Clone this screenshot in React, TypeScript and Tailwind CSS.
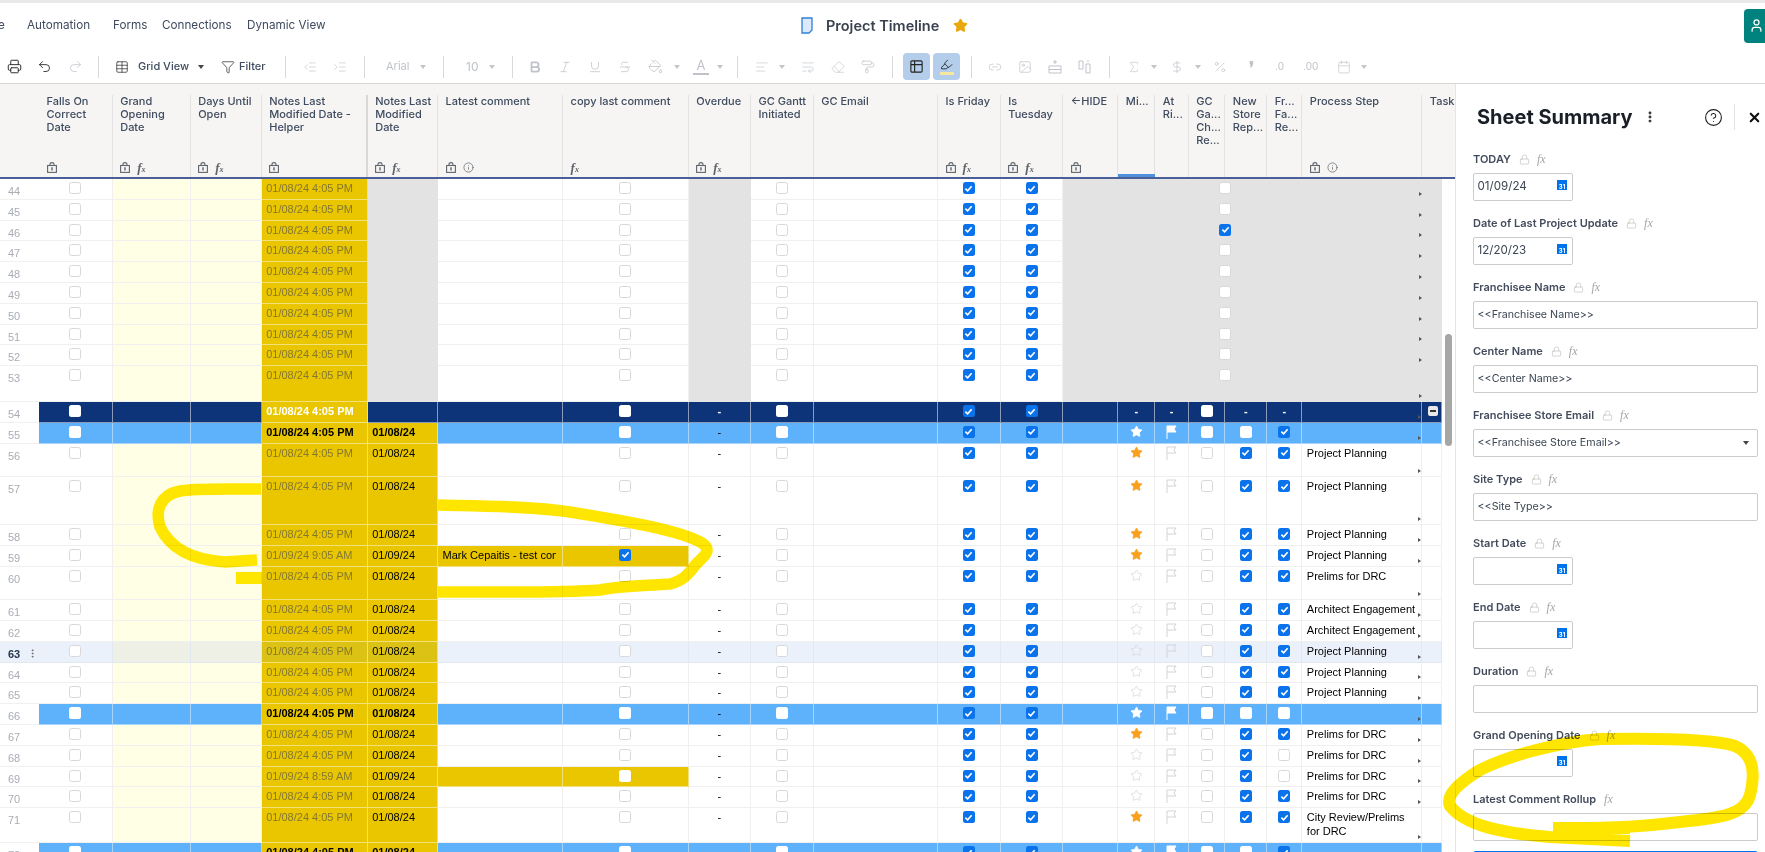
import React from 'react';
import clsx from 'clsx';
import {
  Printer, Undo2, Redo2, Table, Funnel, IndentDecrease, IndentIncrease, Bold, Italic, Underline,
  Strikethrough, PaintBucket, AlignLeft, WrapText, Eraser, PaintRoller, Table2, Highlighter,
  Link2, Image, Sigma, DollarSign, Percent, Calendar, Info, CircleHelp, X, EllipsisVertical,
  Star, User, Lock,
} from 'lucide-react';

type Kind = 'plain' | 'dark' | 'blue' | 'data';

type RowData = {
  n: number;
  h: string;
  kind: Kind;
  helper?: string;
  notes?: string;
  star?: boolean;
  fr?: boolean;
  step?: string[];
  latest?: string;
  gold?: boolean;
  copyChecked?: boolean;
  gc?: boolean;
  hover?: boolean;
};

const H1 = 'h-[20.8px]';
const STAMP = '01/08/24 4:05 PM';
const DAY = '01/08/24';

const rows: RowData[] = [
  ...[44, 45].map((n) => ({ n, h: H1, kind: 'plain' as Kind })),
  { n: 46, h: H1, kind: 'plain', gc: true },
  ...[47, 48, 49, 50, 51, 52].map((n) => ({ n, h: H1, kind: 'plain' as Kind })),
  { n: 53, h: 'h-[36px]', kind: 'plain' },
  { n: 54, h: H1, kind: 'dark' },
  { n: 55, h: H1, kind: 'blue', notes: DAY, fr: true },
  { n: 56, h: 'h-[33.4px]', kind: 'data', star: true, fr: true, step: ['Project Planning'] },
  { n: 57, h: 'h-[48px]', kind: 'data', star: true, fr: true, step: ['Project Planning'] },
  { n: 58, h: H1, kind: 'data', star: true, fr: true, step: ['Project Planning'] },
  { n: 59, h: H1, kind: 'data', star: true, fr: true, step: ['Project Planning'], helper: '01/09/24 9:05 AM', notes: '01/09/24', latest: 'Mark Cepaitis - test comment', gold: true, copyChecked: true },
  { n: 60, h: 'h-[33.4px]', kind: 'data', fr: true, step: ['Prelims for DRC'] },
  { n: 61, h: H1, kind: 'data', fr: true, step: ['Architect Engagement'] },
  { n: 62, h: H1, kind: 'data', fr: true, step: ['Architect Engagement'] },
  { n: 63, h: H1, kind: 'data', fr: true, step: ['Project Planning'], hover: true },
  { n: 64, h: H1, kind: 'data', fr: true, step: ['Project Planning'] },
  { n: 65, h: H1, kind: 'data', fr: true, step: ['Project Planning'] },
  { n: 66, h: H1, kind: 'blue', notes: DAY },
  { n: 67, h: H1, kind: 'data', star: true, fr: true, step: ['Prelims for DRC'] },
  { n: 68, h: H1, kind: 'data', step: ['Prelims for DRC'] },
  { n: 69, h: H1, kind: 'data', step: ['Prelims for DRC'], helper: '01/09/24 8:59 AM', notes: '01/09/24', gold: true },
  { n: 70, h: H1, kind: 'data', fr: true, step: ['Prelims for DRC'] },
  { n: 71, h: 'h-[35px]', kind: 'data', star: true, fr: true, step: ['City Review/Prelims', 'for DRC'] },
  { n: 72, h: H1, kind: 'blue', notes: DAY, fr: true },
];

const headers: { w: string; lines: string[]; lock?: boolean; fx?: boolean; info?: boolean; thick?: boolean; active?: boolean }[] = [
  { w: 'w-[39px]', lines: [] },
  { w: 'w-[73.7px]', lines: ['Falls On', 'Correct', 'Date'], lock: true },
  { w: 'w-[78px]', lines: ['Grand', 'Opening', 'Date'], lock: true, fx: true },
  { w: 'w-[71px]', lines: ['Days Until', 'Open'], lock: true, fx: true },
  { w: 'w-[106px]', lines: ['Notes Last', 'Modified Date -', 'Helper'], lock: true, thick: true },
  { w: 'w-[70.4px]', lines: ['Notes Last', 'Modified', 'Date'], lock: true, fx: true },
  { w: 'w-[125px]', lines: ['Latest comment'], lock: true, info: true },
  { w: 'w-[125.6px]', lines: ['copy last comment'], fx: true },
  { w: 'w-[62.4px]', lines: ['Overdue'], lock: true, fx: true },
  { w: 'w-[62.7px]', lines: ['GC Gantt', 'Initiated'] },
  { w: 'w-[124.3px]', lines: ['GC Email'] },
  { w: 'w-[62.8px]', lines: ['Is Friday'], lock: true, fx: true },
  { w: 'w-[62.5px]', lines: ['Is', 'Tuesday'], lock: true, fx: true },
  { w: 'w-[55px]', lines: ['←HIDE'], lock: true },
  { w: 'w-[37px]', lines: ['Mi...'], active: true },
  { w: 'w-[33.4px]', lines: ['At', 'Ri...'] },
  { w: 'w-[36.6px]', lines: ['GC', 'Ga...', 'Ch...', 'Re...'] },
  { w: 'w-[42px]', lines: ['New', 'Store', 'Rep...'] },
  { w: 'w-[35px]', lines: ['Fr...', 'Fa...', 'Re...'] },
  { w: 'w-[120px]', lines: ['Process Step'], lock: true, info: true },
  { w: 'w-[33px]', lines: ['Task'] },
];

function Fx({ className }: { className?: string }) {
  return <span className={clsx("font-['Liberation_Serif',serif] italic", className)}>fx</span>;
}

// header version of fx, the x sits low and small
function HeadFx() {
  return (
    <span className="font-['Liberation_Serif',serif] text-[13px] font-bold italic leading-none">
      f<span className="text-[8px]">x</span>
    </span>
  );
}

function HeadLock() {
  return (
    <svg width="10" height="11" viewBox="0 0 10 11" fill="none" stroke="currentColor" strokeWidth="1.1" className="shrink-0">
      <path d="M3 3.5V2.2C3 1.2 3.8.6 5 .6s2 .6 2 1.6v1.3" />
      <rect x=".6" y="3.5" width="8.8" height="6.9" />
      <path d="M5 5.2v3.4" strokeWidth="1.4" />
    </svg>
  );
}

function Check({ on, bare }: { on?: boolean; bare?: boolean }) {
  if (on) {
    return (
      <span className="flex h-[12px] w-[12px] items-center justify-center rounded-[2.5px] bg-[#0a73eb]">
        <svg width="9" height="9" viewBox="0 0 10 10" fill="none" stroke="white" strokeWidth="1.8">
          <path d="M1.5 5.2 4 7.6 8.5 2.4" />
        </svg>
      </span>
    );
  }
  return (
    <span className={clsx('block h-[12px] w-[12px] rounded-[2.5px] bg-white', !bare && 'border border-[#d8d8d8]')} />
  );
}

function RowFlag({ white }: { white?: boolean }) {
  return (
    <svg width="11" height="14" viewBox="0 0 11 14" fill={white ? 'white' : 'none'} stroke={white ? 'white' : '#d4d4d4'} strokeWidth="1">
      <path d="M1 1v13M1 1h9L8 4l2 3H1" />
    </svg>
  );
}

function Cell({ w, bg, line, center, className, children }: { w: string; bg: string; line: string; center?: boolean; className?: string; children?: React.ReactNode }) {
  return (
    <div className={clsx('h-full shrink-0 overflow-hidden whitespace-nowrap border-r border-b-[1.5px] leading-[14px]', w, bg, line, center ? 'flex justify-center pt-[3px]' : 'pl-[4.5px] pt-[2px]', className)}>
      {children}
    </div>
  );
}

function SheetRow({ r }: { r: RowData }) {
  const dark = r.kind === 'dark';
  const blue = r.kind === 'blue';
  const filled = dark || blue;
  const base = dark ? 'bg-[#0d3478]' : blue ? 'bg-[#5eb1fb]' : r.hover ? 'bg-[#eaf1fa]' : 'bg-white';
  const pale = filled ? base : r.hover ? 'bg-[#eef0e5]' : 'bg-[#ffffe6]';
  const goldBg = r.hover ? 'bg-[#dcc214]' : 'bg-[#e9c600]';
  const line = dark ? 'border-[#8a9ab8]' : blue ? 'border-[#a8d3fb]' : r.hover ? 'border-[#e2e8f0]' : 'border-[#f0f0f0]';
  const goldLine = 'border-[#f2e07a]';
  const grey = 'bg-[#e3e3e3]';
  const plain = r.kind === 'plain';
  const dash = <span className={clsx(dark ? 'font-bold text-white' : 'text-black')}>-</span>;
  const latestBg = r.gold ? 'bg-[#e9c600]' : base;
  const latestLine = r.gold ? goldLine : line;

  return (
    <div className={clsx('flex', r.h)}>
      <div className={clsx('relative flex h-full w-[39px] shrink-0 border-b-[1.5px] pt-[5px] leading-[14px]', r.hover ? 'bg-[#eaf1fa] border-[#e2e8f0]' : 'bg-white border-[#f0f0f0]')}>
        <span className={clsx('w-[28px] text-center', r.hover ? 'font-bold text-[#26374f]' : 'text-[#a8adb5]')}>{r.n}</span>
        {r.hover && <EllipsisVertical size={11} className="-ml-[1px] mt-[1px] text-[#666]" />}
      </div>
      <Cell w="w-[73.7px]" bg={base} line={line} center><Check bare={filled} /></Cell>
      <Cell w="w-[78px]" bg={pale} line={line} />
      <Cell w="w-[71px]" bg={pale} line={line} />
      <Cell w="w-[106px]" bg={goldBg} line={goldLine} className={clsx(dark ? 'font-bold text-white' : blue ? 'font-bold text-black' : 'text-[#85792f]')}>
        {r.helper ?? STAMP}
      </Cell>
      <Cell w="w-[70.4px]" bg={plain ? grey : dark ? base : goldBg} line={plain ? 'border-[#e3e3e3]' : dark ? line : goldLine} className={clsx('text-black', blue && 'font-bold')}>
        {plain || dark ? '' : r.notes ?? DAY}
      </Cell>
      <Cell w="w-[125px]" bg={latestBg} line={latestLine} className="text-black">
        <div className="w-[113px] overflow-hidden">{r.latest}</div>
      </Cell>
      <Cell w="w-[125.6px]" bg={latestBg} line={latestLine} center><Check on={r.copyChecked} bare={filled || r.gold} /></Cell>
      <Cell w="w-[62.4px]" bg={plain ? grey : base} line={plain ? 'border-[#e3e3e3]' : line} center className="!pt-[2px]">{!plain && dash}</Cell>
      <Cell w="w-[62.7px]" bg={base} line={line} center><Check bare={filled} /></Cell>
      <Cell w="w-[124.3px]" bg={base} line={line} />
      <Cell w="w-[62.8px]" bg={base} line={line} center><Check on /></Cell>
      <Cell w="w-[62.5px]" bg={base} line={line} center><Check on /></Cell>
      {plain ? (
        <div className="relative flex h-full w-[378.7px] shrink-0 border-b-[1.5px] border-[#e3e3e3] bg-[#e3e3e3]">
          <div className="ml-[143.4px] w-[36.6px] pt-[3px]">
            <div className="flex justify-center"><Check on={r.gc} /></div>
          </div>
          <span className="absolute bottom-[3px] left-[356px] h-0 w-0 border-y-[2px] border-l-[3px] border-y-transparent border-l-[#555]" />
        </div>
      ) : (
        <>
          <Cell w="w-[55px]" bg={base} line={line} />
          <Cell w="w-[37px]" bg={base} line={line} center className="!pt-[2px]">
            {dark ? dash : <Star size={13} strokeWidth={1.4} className={blue ? 'fill-white text-white' : r.star ? 'fill-[#f9a11f] text-[#f9a11f]' : 'text-[#d8d8d8]'} />}
          </Cell>
          <Cell w="w-[33.4px]" bg={base} line={line} center className="!pt-[2px]">
            {dark ? dash : <RowFlag white={blue} />}
          </Cell>
          <Cell w="w-[36.6px]" bg={base} line={line} center><Check bare={filled} /></Cell>
          <Cell w="w-[42px]" bg={base} line={line} center className={dark ? '!pt-[2px]' : ''}>
            {dark ? dash : <Check on={!blue} bare={blue} />}
          </Cell>
          <Cell w="w-[35px]" bg={base} line={line} center className={dark ? '!pt-[2px]' : ''}>
            {dark ? dash : <Check on={r.fr} bare={blue && !r.fr} />}
          </Cell>
          <Cell w="w-[120px]" bg={base} line={line} className="relative !whitespace-normal text-black">
            {r.step?.map((s) => <div key={s} className="whitespace-nowrap leading-[14px]">{s}</div>)}
            <span className="absolute bottom-[3px] right-[0.5px] h-0 w-0 border-y-[2px] border-l-[3px] border-y-transparent border-l-[#555]" />
          </Cell>
          <Cell w="w-[19.7px]" bg={base} line={line} className="relative">
            {dark && (
              <span className="absolute left-[6px] top-[4px] flex h-[10px] w-[10px] items-center justify-center rounded-[2px] bg-[#e8e8e8]">
                <span className="h-[2px] w-[6px] bg-[#333]" />
              </span>
            )}
          </Cell>
        </>
      )}
    </div>
  );
}

function HeaderCell({ h }: { h: (typeof headers)[number] }) {
  return (
    <div className={clsx('relative flex h-full shrink-0 flex-col pt-[11px]', h.w)}>
      <div className={clsx('flex min-w-0 flex-1 flex-col overflow-hidden pl-[7.5px] pb-[3px]', h.lines.length > 0 && h.w !== 'w-[33px]' && (h.thick ? 'border-r-2 border-[#d8d8d8]' : 'border-r border-[#e3e3e3]'))}>
        {h.lines.map((l) => <div key={l} className="whitespace-nowrap text-[11px] font-medium leading-[13px] text-[#3f4b5f]">{l}</div>)}
        <div className="mt-auto flex h-[14px] items-center gap-[7px] text-[#5f656e]">
          {h.lock && <HeadLock />}
          {h.fx && <HeadFx />}
          {h.info && <Info size={11} strokeWidth={1.6} />}
        </div>
      </div>
      {h.active && <span className="absolute bottom-0 left-0 h-[3px] w-full bg-[#4e90d9]" />}
    </div>
  );
}

function MiniCal() {
  return (
    <span className="flex h-[10px] w-[10px] items-end justify-center bg-[#0073ec] text-[6px] font-bold leading-[7px] text-white">31</span>
  );
}

function Field({ label, value, type, noLock, wide }: { label: string; value?: string; type: 'date' | 'text' | 'select'; noLock?: boolean; wide?: boolean }) {
  return (
    <div className="mb-[15px]">
      <div className="mb-[7px] flex h-[14px] items-center text-[11px] font-semibold leading-[14px] text-[#434c5c]">
        {label}
        {!noLock && <Lock size={11} strokeWidth={1} className="ml-[8px] text-[#a5a5a5]" />}
        <Fx className={clsx('text-[12px] font-normal text-[#a5a5a5]', noLock ? 'ml-[8px]' : 'ml-[7px]')} />
      </div>
      <div className={clsx('flex h-[28px] items-center rounded-[2px] border border-[#cbcbcb] pl-[3.5px] pr-[5px] text-[#3c4654]', wide ? 'w-[285px] text-[10.7px]' : 'w-[100px] text-[11.6px]')}>
        <span>{value}</span>
        {type === 'date' && <span className="mb-[4px] ml-auto"><MiniCal /></span>}
        {type === 'select' && <span className="ml-auto mr-[3px] h-0 w-0 border-x-[3px] border-t-[4px] border-x-transparent border-t-[#444]" />}
      </div>
    </div>
  );
}

function Caret({ className }: { className?: string }) {
  return <span className={clsx('h-0 w-0 shrink-0 border-x-[3.5px] border-t-[4px] border-x-transparent border-t-[#c2c5ca]', className)} />;
}

function Sep({ className }: { className?: string }) {
  return <span className={clsx('h-[22px] w-px shrink-0 bg-[#d9d9d9]', className)} />;
}

function Toolbar() {
  const off = 'shrink-0 text-[#bfc3c9]';
  return (
    <div className="flex h-[39px] items-center border-b border-[#d8d8d8] pt-[5px] text-[11px]">
      <Printer size={15} strokeWidth={1.6} className="ml-[7px] shrink-0 text-[#333]" />
      <Undo2 size={15} strokeWidth={1.5} className="ml-[15px] shrink-0 text-[#333]" />
      <Redo2 size={15} strokeWidth={1.2} className={clsx('ml-[16px]', off)} />
      <Sep className="ml-[15px]" />
      <Table size={14} strokeWidth={1.3} className="ml-[16px] shrink-0 text-[#333]" />
      <span className="ml-[9px] w-[50px] shrink-0 whitespace-nowrap font-medium text-[#3f4b5f]">Grid View</span>
      <Caret className="ml-[10px] !border-t-[#444]" />
      <Funnel size={14} strokeWidth={1.3} className="ml-[17px] shrink-0 text-[#333]" />
      <span className="ml-[4px] w-[27px] shrink-0 font-medium text-[#3f4b5f]">Filter</span>
      <Sep className="ml-[19px]" />
      <IndentDecrease size={14} strokeWidth={1.1} className={clsx('ml-[17px]', off)} />
      <IndentIncrease size={14} strokeWidth={1.1} className={clsx('ml-[16px]', off)} />
      <Sep className="ml-[17px]" />
      <span className="ml-[21px] w-[24px] shrink-0 text-[#bfc3c9]">Arial</span>
      <Caret className="ml-[10px]" />
      <Sep className="ml-[17px]" />
      <span className="ml-[22px] w-[13px] shrink-0 text-[12px] text-[#bfc3c9]">10</span>
      <Caret className="ml-[10px]" />
      <Sep className="ml-[17px]" />
      <Bold size={14} strokeWidth={3} className={clsx('ml-[15px]', off)} />
      <Italic size={14} strokeWidth={1.3} className={clsx('ml-[16px]', off)} />
      <Underline size={14} strokeWidth={1.3} className={clsx('ml-[16px]', off)} />
      <Strikethrough size={14} strokeWidth={1.3} className={clsx('ml-[16px]', off)} />
      <PaintBucket size={15} strokeWidth={1.3} className={clsx('ml-[16px]', off)} />
      <Caret className="ml-[11px]" />
      <span className="ml-[13px] flex w-[16px] shrink-0 flex-col items-center border-b-2 border-[#bfc3c9] text-[13px] leading-[15px] text-[#bfc3c9]">A</span>
      <Caret className="ml-[8px]" />
      <Sep className="ml-[14px]" />
      <AlignLeft size={14} strokeWidth={1.1} className={clsx('ml-[17px]', off)} />
      <Caret className="ml-[10px]" />
      <WrapText size={14} strokeWidth={1.1} className={clsx('ml-[16px]', off)} />
      <Eraser size={14} strokeWidth={1.1} className={clsx('ml-[16px]', off)} />
      <PaintRoller size={14} strokeWidth={1.3} className={clsx('ml-[16px]', off)} />
      <Sep className="ml-[17px]" />
      <span className="ml-[10px] flex h-[27px] w-[27px] shrink-0 items-center justify-center rounded-[4px] bg-[#b3cdeb]">
        <Table2 size={15} strokeWidth={1.8} className="text-[#222]" />
      </span>
      <span className="ml-[3px] flex h-[27px] w-[27px] shrink-0 flex-col items-center justify-center rounded-[4px] bg-[#b3cdeb]">
        <Highlighter size={13} strokeWidth={1.6} className="text-[#222]" />
        <span className="mt-[1px] h-[3px] w-[14px] bg-[#f7e8a0]" />
      </span>
      <Sep className="ml-[11px]" />
      <Link2 size={14} strokeWidth={1.2} className={clsx('ml-[16px]', off)} />
      <Image size={14} strokeWidth={1.2} className={clsx('ml-[16px]', off)} />
      <svg width="14" height="14" viewBox="0 0 14 14" fill="none" stroke="#bfc3c9" className="ml-[16px] shrink-0">
        <path d="M7 0v4M5 2h4M1 6h12v7H1zM1 9.5h12" />
      </svg>
      <svg width="14" height="14" viewBox="0 0 14 14" fill="none" stroke="#bfc3c9" className="ml-[16px] shrink-0">
        <path d="M1 1h4v8H1zM8 4h4v9H8zM10 0v2" />
      </svg>
      <Sep className="ml-[17px]" />
      <Sigma size={14} strokeWidth={1.1} className={clsx('ml-[17px]', off)} />
      <Caret className="ml-[10px]" />
      <DollarSign size={14} strokeWidth={1.2} className={clsx('ml-[13px]', off)} />
      <Caret className="ml-[11px]" />
      <Percent size={14} strokeWidth={1.2} className={clsx('ml-[12px]', off)} />
      <span className="ml-[17px] w-[14px] shrink-0 text-center text-[16px] font-bold leading-[14px] text-[#bfc3c9]">❜</span>
      <span className="ml-[17px] w-[14px] shrink-0 text-[10px] text-[#bfc3c9]">.0</span>
      <span className="ml-[14px] w-[18px] shrink-0 text-[10px] text-[#bfc3c9]">.00</span>
      <Calendar size={14} strokeWidth={1.1} className={clsx('ml-[16px]', off)} />
      <Caret className="ml-[10px]" />
    </div>
  );
}

function Scribbles() {
  return (
    <svg className="pointer-events-none absolute inset-0 mix-blend-multiply" width="1765" height="852" viewBox="0 0 1765 852" fill="none" stroke="#ffe600" strokeWidth="11.5" strokeLinejoin="round">
      <path d="M261 489C225 489 195 488 180 491C160 495 155 510 160 527C170 548 192 560 225 562L257 560" />
      <path d="M438 505C480 506 530 506 570 512C620 520 680 530 702 543C712 550 705 556 697 563C690 572 685 580 670 584C640 586 620 586 600 590C560 593 500 592 438 592" />
      <path d="M236 578H262" strokeWidth="12" />
      <path strokeWidth="12" d="M1553 828C1600 829 1640 827 1680 822C1720 818 1745 815 1750 795C1755 775 1755 755 1735 746C1715 739 1660 738 1600 739C1560 742 1510 755 1480 770C1460 782 1445 795 1450 806C1465 825 1500 833 1550 837L1630 841" />
      <path strokeWidth="12" d="M1553 828H1630" />
    </svg>
  );
}

export default function App() {
  return (
    <div className="relative h-[852px] w-[1765px] overflow-hidden bg-white font-['Inter',sans-serif]">
      <div className="h-[3px] bg-[#e9e9ec]" />

      {/* tabs + sheet name */}
      <div className="flex h-[42px] items-center pt-[3px] text-[11.7px] text-[#3f4b5f]">
        <span className="-ml-[2px] w-[7px] overflow-hidden">e</span>
        <span className="ml-[22px] w-[63px] shrink-0">Automation</span>
        <span className="ml-[23px] w-[33px] shrink-0">Forms</span>
        <span className="ml-[16px] w-[69px] shrink-0">Connections</span>
        <span className="ml-[16px] w-[77px] shrink-0 whitespace-nowrap">Dynamic View</span>
        <svg width="12" height="17" viewBox="0 0 12 17" className="ml-[477px] shrink-0">
          <path d="M1 1h10v12l-3 3H1z" fill="#dbe9fa" stroke="#2f80d8" strokeWidth="1.3" />
        </svg>
        <span className="ml-[13px] w-[113px] shrink-0 whitespace-nowrap text-[14.5px] font-semibold text-[#3a4250]">Project Timeline</span>
        <Star size={15} className="ml-[14px] shrink-0 fill-[#eaa70f] text-[#eaa70f]" />
        <span className="ml-auto flex h-[34px] w-[21px] items-center justify-center rounded-l-[4px] bg-[#00827f]">
          <User size={15} className="ml-[3px] shrink-0 text-white" />
        </span>
      </div>

      <Toolbar />

      <div className="flex h-[768px]">
        <div className="relative w-[1455px] shrink-0 overflow-hidden text-[11px] font-['Liberation_Sans',sans-serif]">
          <div className="flex h-[95px] border-b-2 border-[#4a5f9a] bg-[#f6f5f3] font-['Inter',sans-serif]">
            {headers.map((h, i) => <HeaderCell key={i} h={h} />)}
          </div>
          <div className="w-[1442px]">
            {rows.map((r) => <SheetRow key={r.n} r={r} />)}
          </div>
          {/* scrollbar */}
          <span className="absolute left-[1445px] top-[250px] h-[112px] w-[7px] rounded-[4px] bg-[#a6a6a6]" />
        </div>

        <div className="w-[310px] shrink-0 overflow-hidden border-l border-[#e5e5e5] pl-[17px]">
          <div className="flex h-[68px] items-center pb-[2px]">
            <span className="ml-[4px] w-[156px] shrink-0 whitespace-nowrap text-[20px] font-bold text-[#1a1f27]">Sheet Summary</span>
            <EllipsisVertical size={14} strokeWidth={3} className="ml-[10px] shrink-0 text-[#333]" />
            <CircleHelp size={19} strokeWidth={1.4} className="ml-[47px] shrink-0 text-[#222]" />
            <span className="ml-[11px] h-[26px] w-px shrink-0 bg-[#e2e2e2]" />
            <X size={15} strokeWidth={3.4} className="ml-[12px] shrink-0 text-[#111]" />
          </div>
          <Field label="TODAY" value="01/09/24" type="date" />
          <Field label="Date of Last Project Update" value="12/20/23" type="date" />
          <Field label="Franchisee Name" value="<<Franchisee Name>>" type="text" wide />
          <Field label="Center Name" value="<<Center Name>>" type="text" wide />
          <Field label="Franchisee Store Email" value="<<Franchisee Store Email>>" type="select" wide />
          <Field label="Site Type" value="<<Site Type>>" type="text" wide />
          <Field label="Start Date" type="date" />
          <Field label="End Date" type="date" />
          <Field label="Duration" type="text" wide />
          <Field label="Grand Opening Date" type="date" />
          <Field label="Latest Comment Rollup" type="text" noLock wide />
          <div className="-mt-[5px] h-[20px] w-[285px] rounded-t-[3px] bg-[#0073ec]" />
        </div>
      </div>

      <Scribbles />
    </div>
  );
}
